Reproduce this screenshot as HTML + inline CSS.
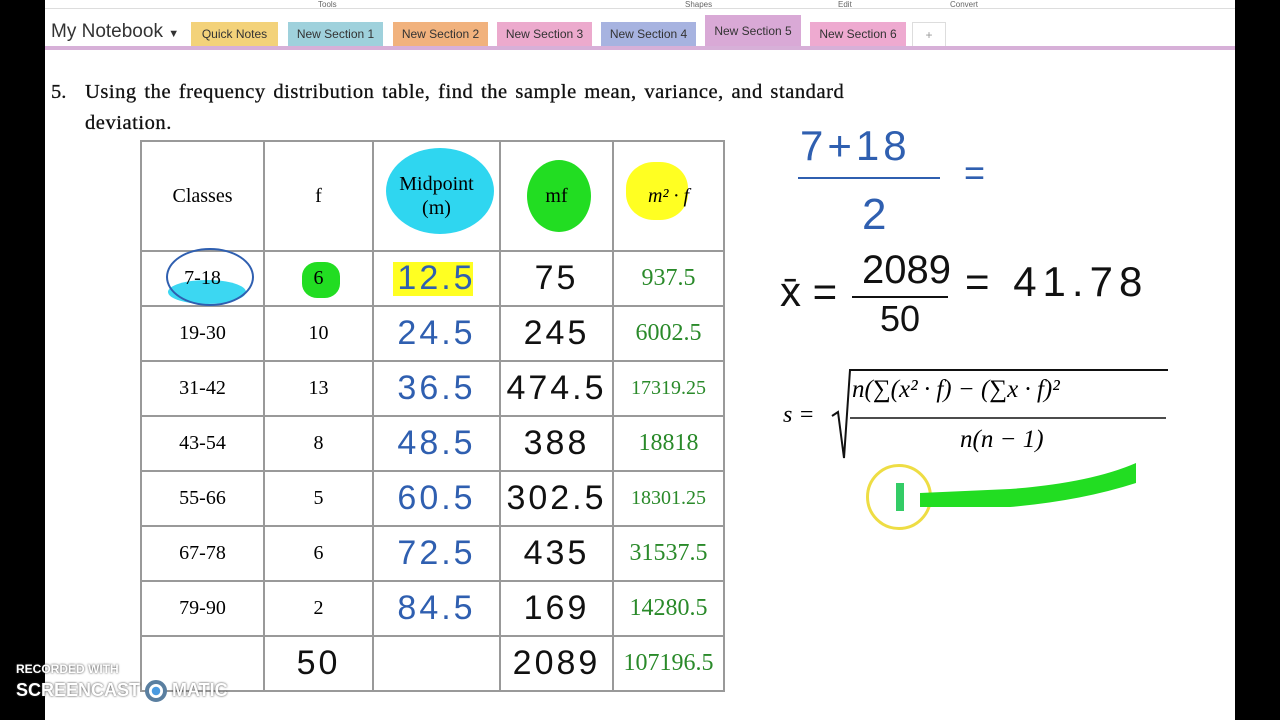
<!DOCTYPE html>
<html><head><meta charset="utf-8"><style>
body{margin:0;width:1280px;height:720px;background:#fff;position:relative;overflow:hidden;font-family:"Liberation Sans",sans-serif}
.bl{position:absolute;top:0;bottom:0;width:45px;background:#000}
.tab{position:absolute;top:22px;height:25px;font-size:12px;line-height:25px;text-align:center;color:#333}
.q{font-family:"Liberation Serif",serif;font-size:20.5px;position:absolute;color:#111;-webkit-text-stroke:0.3px #111}
table{position:absolute;left:140px;top:140px;border-collapse:collapse;font-family:"Liberation Serif",serif}
td{border:2px solid #999;text-align:center;font-size:20px;height:53px;padding:0}
.h{font-family:"Liberation Sans",sans-serif;font-weight:300;font-size:34px;letter-spacing:3px}
.b{color:#2f5fb0}.k{color:#111}.g{color:#2a8a2a;font-size:24px;letter-spacing:0}
.hw{position:absolute;font-family:"Liberation Sans",sans-serif;font-weight:300}
</style></head><body>
<div class="bl" style="left:0"></div><div class="bl" style="left:1235px"></div>
<div style="position:absolute;left:45px;right:45px;top:0;height:8px;border-bottom:1px solid #ddd;font-size:8px;color:#666"><span style="position:absolute;left:273px">Tools</span><span style="position:absolute;left:640px">Shapes</span><span style="position:absolute;left:793px">Edit</span><span style="position:absolute;left:905px">Convert</span></div>
<div style="position:absolute;left:51px;top:21px;font-size:19px;color:#333">My Notebook <span style="font-size:11px">▼</span></div>
<div class="tab" style="left:191px;width:87px;background:#f3d27a">Quick Notes</div>
<div class="tab" style="left:288px;width:95px;background:#9fd1dc">New Section 1</div>
<div class="tab" style="left:393px;width:95px;background:#f1b27d">New Section 2</div>
<div class="tab" style="left:497px;width:95px;background:#ecaacd">New Section 3</div>
<div class="tab" style="left:601px;width:95px;background:#a7b3e0">New Section 4</div>
<div class="tab" style="left:705px;width:96px;top:15px;height:32px;line-height:32px;background:#d9a9d6">New Section 5</div>
<div class="tab" style="left:810px;width:96px;background:#eeaad0">New Section 6</div>
<div class="tab" style="left:912px;width:32px;background:#fff;border:1px solid #ddd;color:#999">+</div>
<div style="position:absolute;left:45px;width:1190px;top:46px;height:4px;background:#d7b0d8"></div>
<div class="q" style="left:51px;top:81px">5.</div>
<div class="q" style="left:85px;top:81px;letter-spacing:0.55px;word-spacing:2px;white-space:nowrap">Using the frequency distribution table, find the sample mean, variance, and standard</div>
<div class="q" style="left:85px;top:112px;letter-spacing:0.55px">deviation.</div>
<div style="position:absolute;left:386px;top:148px;width:108px;height:86px;border-radius:50%;background:#2fd6f0"></div>
<div style="position:absolute;left:527px;top:160px;width:64px;height:72px;border-radius:50%;background:#22dd22"></div>
<div style="position:absolute;left:626px;top:162px;width:62px;height:58px;border-radius:45%;background:#ffff22"></div>
<div style="position:absolute;left:168px;top:280px;width:78px;height:24px;border-radius:50%;background:#3cd7f2"></div>
<div style="position:absolute;left:302px;top:262px;width:38px;height:36px;border-radius:40%;background:#22dd22"></div>
<div style="position:absolute;left:393px;top:262px;width:80px;height:34px;background:#ffff22"></div>
<table><tr><td style="width:121px;height:108px">Classes</td><td style="width:107px">f</td><td style="width:125px;line-height:24px">Midpoint<br>(m)</td><td style="width:111px">mf</td><td style="width:109px"><i>m² · f</i></td></tr>
<tr><td>7-18</td><td>6</td><td class="h b">12.5</td><td class="h k">75</td><td class="g">937.5</td></tr>
<tr><td>19-30</td><td>10</td><td class="h b">24.5</td><td class="h k">245</td><td class="g">6002.5</td></tr>
<tr><td>31-42</td><td>13</td><td class="h b">36.5</td><td class="h k">474.5</td><td class="g" style="font-size:20px">17319.25</td></tr>
<tr><td>43-54</td><td>8</td><td class="h b">48.5</td><td class="h k">388</td><td class="g">18818</td></tr>
<tr><td>55-66</td><td>5</td><td class="h b">60.5</td><td class="h k">302.5</td><td class="g" style="font-size:20px">18301.25</td></tr>
<tr><td>67-78</td><td>6</td><td class="h b">72.5</td><td class="h k">435</td><td class="g">31537.5</td></tr>
<tr><td>79-90</td><td>2</td><td class="h b">84.5</td><td class="h k">169</td><td class="g">14280.5</td></tr>
<tr><td></td><td class="h k">50</td><td></td><td class="h k">2089</td><td class="g">107196.5</td></tr></table>
<div style="position:absolute;left:166px;top:248px;width:84px;height:54px;border:2px solid #2f5fb0;border-radius:50%"></div>
<div class="hw" style="left:800px;top:122px;font-size:42px;color:#2f5fb0;letter-spacing:4px">7+18</div>
<div style="position:absolute;left:798px;top:177px;width:142px;height:2px;background:#2f5fb0"></div>
<div class="hw" style="left:862px;top:190px;font-size:44px;color:#2f5fb0">2</div>
<div class="hw" style="left:964px;top:152px;font-size:36px;color:#2f5fb0">=</div>
<div class="hw" style="left:780px;top:268px;font-size:42px;color:#111">x̄ =</div>
<div class="hw" style="left:862px;top:248px;font-size:40px;color:#111">2089</div>
<div style="position:absolute;left:852px;top:296px;width:96px;height:2px;background:#111"></div>
<div class="hw" style="left:880px;top:298px;font-size:36px;color:#111">50</div>
<div class="hw" style="left:965px;top:258px;font-size:42px;color:#111;letter-spacing:6px">= 41.78</div>
<div style="position:absolute;left:783px;top:402px;font-family:'Liberation Serif',serif;font-style:italic;font-size:24px">s =</div>
<svg style="position:absolute;left:828px;top:366px" width="345" height="100"><path d="M4 50 L10 46 L16 92 L22 4 L340 4" stroke="#111" stroke-width="2" fill="none"/><line x1="22" y1="52" x2="338" y2="52" stroke="#111" stroke-width="1.5"/></svg>
<div style="position:absolute;left:852px;top:376px;font-family:'Liberation Serif',serif;font-style:italic;font-size:25px">n(∑(x² · f) − (∑x · f)²</div>
<div style="position:absolute;left:960px;top:426px;font-family:'Liberation Serif',serif;font-style:italic;font-size:25px">n(n − 1)</div>
<div style="position:absolute;left:866px;top:464px;width:66px;height:66px;border-radius:50%;border:3px solid #eedd44;box-sizing:border-box"></div>
<svg style="position:absolute;left:890px;top:455px" width="250" height="60"><path d="M30 38 L120 34 Q200 28 246 8 L246 28 Q190 46 120 52 L30 52 Z" fill="#22dd22"/><rect x="6" y="28" width="8" height="28" fill="#33cc66"/></svg>
<div style="position:absolute;left:16px;top:662px;color:#fff;font-weight:bold;font-size:12px;text-shadow:0 0 2px #333">RECORDED WITH</div>
<div style="position:absolute;left:16px;top:680px;color:#fff;font-weight:bold;font-size:18px;text-shadow:0 0 2px #333">SCREENCAST <span style="display:inline-block;width:22px;height:22px;border:4px solid #5a7fa0;border-radius:50%;vertical-align:middle;box-sizing:border-box;background:radial-gradient(#4a9ae0 40%,#fff 45%)"></span> MATIC</div>
</body></html>
